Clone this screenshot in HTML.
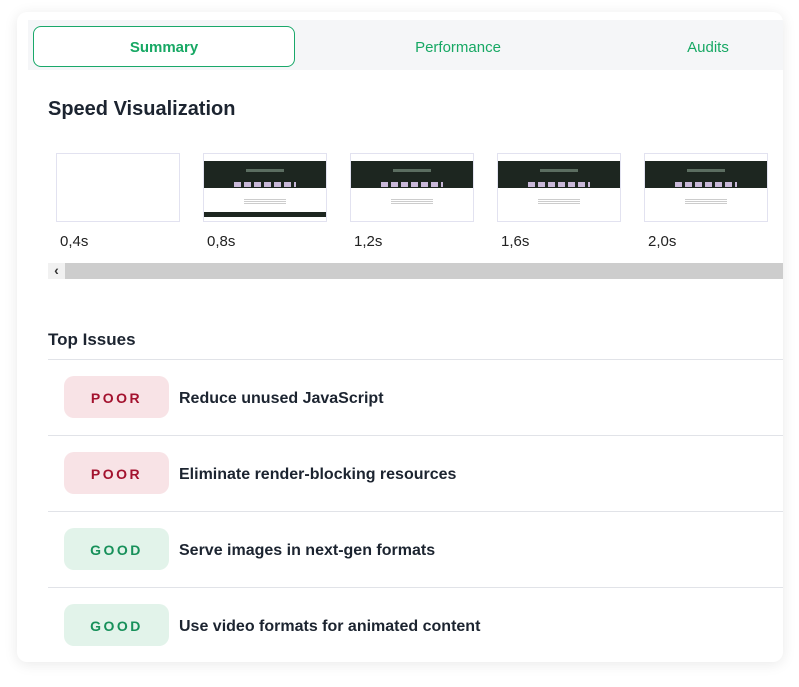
<!DOCTYPE html><html><head><style>
body{margin:0;width:799px;height:687px;background:#fff;font-family:"Liberation Sans",sans-serif;overflow:hidden;position:relative}
.card{position:absolute;left:17px;top:12px;width:766px;height:650px;background:#fff;border-radius:10px;box-shadow:0 2px 14px rgba(0,0,0,.09);overflow:hidden}
.tabs{position:absolute;left:11px;top:8px;width:760px;height:50px;background:#f5f6f8}
.tab{position:absolute;top:8px;height:39px;line-height:39px;text-align:center;color:#17a864;font-size:15px}
.t1{top:6px;left:5px;width:260px;border:1.5px solid #1aa86a;border-radius:8px;background:#fff;font-weight:bold;line-height:42px}
h2{position:absolute;left:31px;top:86px;margin:0;font-size:20px;color:#1c2430}
h3{position:absolute;left:31px;top:318px;margin:0;font-size:17px;color:#1c2430}
.th{position:absolute;top:141px;width:122px;height:67px;border:1px solid #e2e2f0;background:#fff}
.th .d{position:absolute;left:0;right:0;top:7px;height:27px;background:#1d2620}
.th .d:before{content:"";position:absolute;left:30px;right:30px;top:21px;height:5px;background:repeating-linear-gradient(90deg,#c9b9d9 0 7px,#1d2620 7px 10px)}
.th .d:after{content:"";position:absolute;left:42px;width:38px;top:8px;height:3px;background:#5b6d60}
.th .n{position:absolute;left:40px;width:42px;top:45px;height:6px;background:repeating-linear-gradient(180deg,#ccc 0 1px,#fff 1px 2px)}
.th .b{position:absolute;left:0;right:0;top:58px;height:5px;background:#1d2620}
.lb{position:absolute;top:221px;font-size:15px;color:#222}
.sb{position:absolute;left:31px;top:251px;width:740px;height:16px;background:#cdcdcd}
.sb i{position:absolute;left:0;top:0;width:17px;height:16px;background:#f1f1f1;font-style:normal;font-size:14px;line-height:15px;text-align:center;color:#333;font-weight:bold}
.row{position:absolute;left:31px;width:740px;height:76px;border-top:1px solid #e1e3e8}
.bd{position:absolute;left:16px;top:16px;width:105px;height:42px;border-radius:10px;text-align:center;line-height:44px;font-weight:bold;font-size:14px;letter-spacing:2.5px}
.p{background:#f8e3e6;color:#a3122e}.g{background:#e2f3ea;color:#17905a}
.row span{position:absolute;left:131px;top:30px;font-size:16px;font-weight:bold;color:#1c2430}
</style></head><body><div class="card">
<div class="tabs"><div class="tab t1">Summary</div><div class="tab" style="left:300px;width:260px">Performance</div><div class="tab" style="left:560px;width:240px">Audits</div></div>
<h2>Speed Visualization</h2>
<div class="th" style="left:39px"></div>
<div class="th" style="left:186px"><div class="d"></div><div class="n"></div><div class="b"></div></div>
<div class="th" style="left:333px"><div class="d"></div><div class="n"></div></div>
<div class="th" style="left:480px"><div class="d"></div><div class="n"></div></div>
<div class="th" style="left:627px"><div class="d"></div><div class="n"></div></div>
<div class="lb" style="left:43px">0,4s</div><div class="lb" style="left:190px">0,8s</div><div class="lb" style="left:337px">1,2s</div><div class="lb" style="left:484px">1,6s</div><div class="lb" style="left:631px">2,0s</div>
<div class="sb"><i>&lsaquo;</i></div>
<h3>Top Issues</h3>
<div class="row" style="top:347px"><div class="bd p">POOR</div><span>Reduce unused JavaScript</span></div>
<div class="row" style="top:423px"><div class="bd p">POOR</div><span>Eliminate render-blocking resources</span></div>
<div class="row" style="top:499px"><div class="bd g">GOOD</div><span>Serve images in next-gen formats</span></div>
<div class="row" style="top:575px"><div class="bd g">GOOD</div><span>Use video formats for animated content</span></div>
</div></body></html>
